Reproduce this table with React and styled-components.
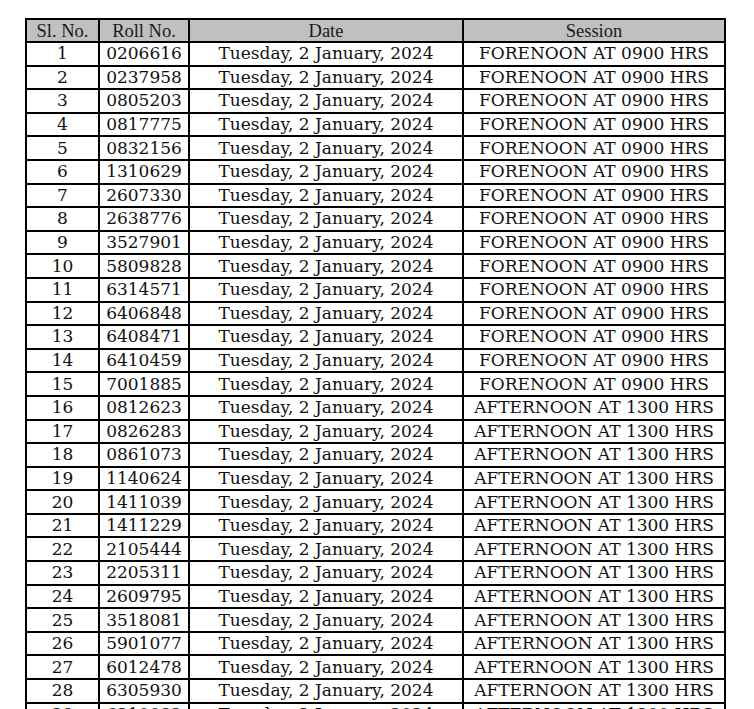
import React from "react";
import styled, { createGlobalStyle } from "styled-components";

const Global = createGlobalStyle`
  html, body { margin: 0; padding: 0; background: #fff; }
  body { overflow: hidden; }
`;

const Page = styled.div`
  padding: 18px 0 0 25px;
  width: 754px;
  height: 709px;
  box-sizing: border-box;
  overflow: hidden;
`;

const Table = styled.table`
  border-collapse: collapse;
  table-layout: fixed;
  width: 699px;
  border: 2px solid #000;
`;

const HeadCell = styled.th`
  background: #c0c0c0;
  border: 2px solid #000;
  font-family: "Liberation Serif", "Times New Roman", serif;
  font-weight: normal;
  font-size: 18.5px;
  color: #1a1a1a;
  height: 20px;
  padding: 1px 0 0;
  line-height: 19px;
  text-align: center;
`;

const Cell = styled.td`
  border: 2px solid #000;
  font-family: "DejaVu Serif", "Liberation Serif", serif;
  font-size: 17px;
  color: #111;
  height: 21.6px;
  padding: 0;
  line-height: 21px;
  text-align: center;
  white-space: nowrap;
  overflow: hidden;
`;

const rolls = [
  "0206616","0237958","0805203","0817775","0832156","1310629","2607330","2638776",
  "3527901","5809828","6314571","6406848","6408471","6410459","7001885","0812623",
  "0826283","0861073","1140624","1411039","1411229","2105444","2205311","2609795",
  "3518081","5901077","6012478","6305930","6310082",
];

export default function App() {
  return (
    <Page>
      <Global />
      <Table>
        <colgroup>
          <col style={{ width: 73 }} />
          <col style={{ width: 90 }} />
          <col style={{ width: 274 }} />
          <col style={{ width: 262 }} />
        </colgroup>
        <thead>
          <tr>
            <HeadCell>Sl. No.</HeadCell>
            <HeadCell>Roll No.</HeadCell>
            <HeadCell>Date</HeadCell>
            <HeadCell>Session</HeadCell>
          </tr>
        </thead>
        <tbody>
          {rolls.map((r, i) => (
            <tr key={r}>
              <Cell>{i + 1}</Cell>
              <Cell>{r}</Cell>
              <Cell>Tuesday, 2 January, 2024</Cell>
              <Cell>{i < 15 ? "FORENOON AT 0900 HRS" : "AFTERNOON AT 1300 HRS"}</Cell>
            </tr>
          ))}
        </tbody>
      </Table>
    </Page>
  );
}
